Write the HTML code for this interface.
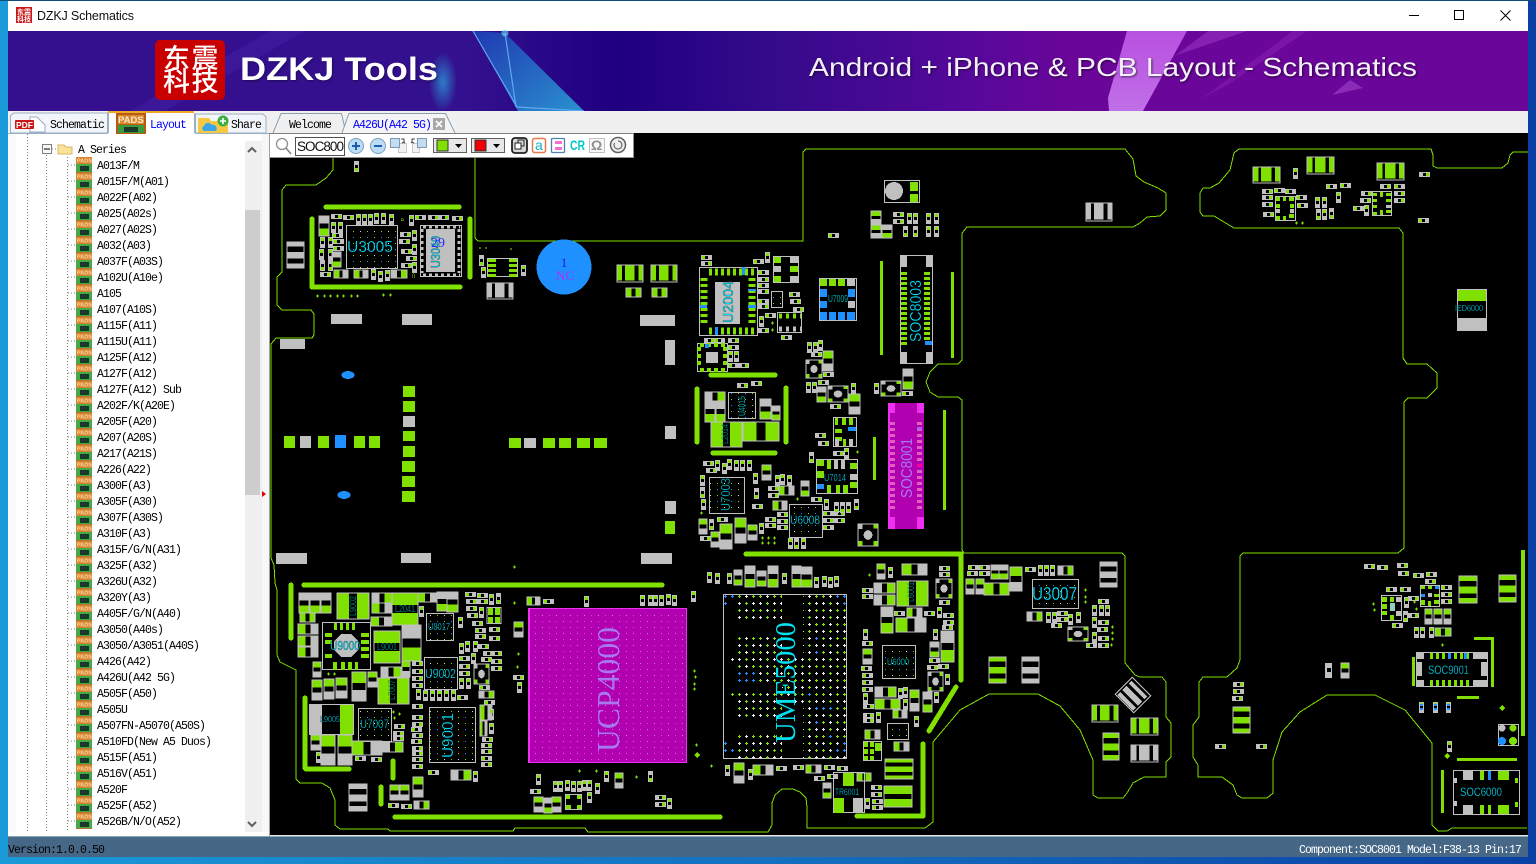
<!DOCTYPE html>
<html><head><meta charset="utf-8"><title>DZKJ Schematics</title>
<style>
html,body{margin:0;padding:0;width:1536px;height:864px;overflow:hidden;background:#0c4aa8}
svg{display:block}
text{white-space:pre}
.m{font:11.5px "Liberation Mono",monospace;letter-spacing:-.9px;fill:#000}
.g{fill:#80e000}.s{fill:#c0c0c0}.u{fill:#1e90ff}.o{fill:none;stroke:#c0c0c0}
.k{fill:#000}
.l{fill:none;stroke:#80e000}
.t{fill:none;stroke:#80e000;stroke-width:5;stroke-linecap:round}
.d{fill:url(#pd);stroke:#c0c0c0}
.dg{fill:none;stroke:#80e000}.ds{fill:none;stroke:#c0c0c0}.db{fill:none;stroke:#1e90ff}
.x{font-family:"Liberation Sans",sans-serif;fill:#00e5ff;stroke:#000;stroke-width:.25}
.y{font-family:"Liberation Sans",sans-serif;fill:#00a8a8}
.z{font-family:"Liberation Serif",serif}
#pcb{shape-rendering:crispEdges}
#pcb text{shape-rendering:auto}
</style></head><body>
<svg width="1536" height="864" viewBox="0 0 1536 864" xmlns="http://www.w3.org/2000/svg">
<defs>
<linearGradient id="desk" x1="0" x2="1" y1="0" y2="0"><stop offset="0" stop-color="#1a9ad8"/><stop offset=".5" stop-color="#1470c0"/><stop offset="1" stop-color="#0a40a4"/></linearGradient>
<linearGradient id="ban" x1="0" x2="1" y1="0" y2="0"><stop offset="0" stop-color="#35108e"/><stop offset=".3" stop-color="#33108e"/><stop offset=".4" stop-color="#1f0080"/><stop offset=".5" stop-color="#330a8a"/><stop offset=".63" stop-color="#55089a"/><stop offset=".7" stop-color="#6a0699"/><stop offset="1" stop-color="#6a0699"/></linearGradient>
<linearGradient id="bl" x1="0" x2="1" y1="0" y2="1"><stop offset="0" stop-color="#2038b0"/><stop offset="1" stop-color="#2a90d0"/></linearGradient>
<linearGradient id="pu" x1="0" x2="0" y1="0" y2="1"><stop offset="0" stop-color="#b850e0"/><stop offset="1" stop-color="#c070e8"/></linearGradient>
<radialGradient id="gl"><stop offset="0" stop-color="#2a98d8"/><stop offset="1" stop-color="#2a98d8" stop-opacity="0"/></radialGradient>
<pattern id="pd" width="14" height="12" patternUnits="userSpaceOnUse"><path fill="#80e000" d="M3 3h1v1h-1zM10 9h1v1h-1z"/><path fill="#e0e0e0" d="M10 3h1v1h-1z"/><path fill="#1e90ff" d="M3 9h1v1h-1z"/></pattern>
<pattern id="pm" width="14" height="12" patternUnits="userSpaceOnUse"><path fill="#e040c0" d="M3 3h1v1h-1zM10 9h1v1h-1z"/><path fill="#d080e0" d="M10 3h1v1h-1zM3 9h1v1h-1z"/></pattern>
<pattern id="pb" width="21" height="14" patternUnits="userSpaceOnUse" patternTransform="translate(736 593)"><path fill="#80e000" d="M3 2h1v1h1v1h-1v1h-1v-1h-1v-1h1zM10 9h1v1h1v1h-1v1h-1v-1h-1v-1h1zM17 2h1v1h1v1h-1v1h-1v-1h-1v-1h1z"/><path fill="#e8e8e8" d="M10 2h1v1h1v1h-1v1h-1v-1h-1v-1h1zM3 9h1v1h1v1h-1v1h-1v-1h-1v-1h1zM17 9h1v1h1v1h-1v1h-1v-1h-1v-1h1z"/></pattern>
<pattern id="pu2" width="7" height="7" patternUnits="userSpaceOnUse" patternTransform="translate(736 593)"><path fill="#1e90ff" d="M3 2h1v1h1v1h-1v1h-1v-1h-1v-1h1z"/></pattern>
<g id="a"><rect width="4" height="5" class="s"/><rect x="7" width="4" height="5" class="g"/><rect x=".5" y=".5" width="10" height="4" class="o"/></g>
<g id="b"><rect width="4" height="5" class="g"/><rect x="7" width="4" height="5" class="s"/><rect x=".5" y=".5" width="10" height="4" class="o"/></g>
<g id="c"><rect width="5" height="4" class="g"/><rect y="7" width="5" height="4" class="s"/><rect x=".5" y=".5" width="4" height="10" class="o"/></g>
<g id="e"><rect width="5" height="4" class="s"/><rect y="7" width="5" height="4" class="g"/><rect x=".5" y=".5" width="4" height="10" class="o"/></g>
<g id="A"><rect width=".38" height="1" class="s"/><rect x=".62" width=".38" height="1" class="g"/><rect width="1" height="1" class="o" vector-effect="non-scaling-stroke"/></g>
<g id="B"><rect width=".38" height="1" class="g"/><rect x=".62" width=".38" height="1" class="s"/><rect width="1" height="1" class="o" vector-effect="non-scaling-stroke"/></g>
<g id="C"><rect width="1" height=".38" class="g"/><rect y=".62" width="1" height=".38" class="s"/><rect width="1" height="1" class="o" vector-effect="non-scaling-stroke"/></g>
<g id="D"><rect width="1" height=".38" class="s"/><rect y=".62" width="1" height=".38" class="g"/><rect width="1" height="1" class="o" vector-effect="non-scaling-stroke"/></g>
<g id="GG"><rect width=".38" height="1" class="g"/><rect x=".62" width=".38" height="1" class="g"/><rect width="1" height="1" class="o" vector-effect="non-scaling-stroke"/></g>
<g id="HH"><rect width="1" height=".38" class="g"/><rect y=".62" width="1" height=".38" class="g"/><rect width="1" height="1" class="o" vector-effect="non-scaling-stroke"/></g>
<g id="SH"><rect width="1" height=".18" class="g"/><rect y=".38" width="1" height=".26" class="g"/><rect y=".82" width="1" height=".18" class="g"/><rect width="1" height="1" class="o" vector-effect="non-scaling-stroke"/></g>
<g id="XH"><rect width="1" height=".18" class="s"/><rect y=".38" width="1" height=".26" class="s"/><rect y=".82" width="1" height=".18" class="s"/><rect width="1" height="1" class="o" vector-effect="non-scaling-stroke"/></g>
<g id="SV"><rect width=".2" height=".92" class="g"/><rect x=".3" width=".38" height=".92" class="g"/><rect x=".82" width=".16" height=".92" class="g"/><rect width="1" height="1" class="o" vector-effect="non-scaling-stroke"/></g>
<g id="XV"><rect width=".2" height=".92" class="s"/><rect x=".3" width=".38" height=".92" class="s"/><rect x=".82" width=".16" height=".92" class="s"/><rect width="1" height="1" class="o" vector-effect="non-scaling-stroke"/></g>
<g id="Z"><rect width=".22" height=".22" class="s"/><rect x=".78" width=".22" height=".2" class="g"/><rect y=".78" width=".22" height=".22" class="g"/><rect x=".78" y=".78" width=".22" height=".22" class="g"/><ellipse cx=".5" cy=".5" rx=".22" ry=".22" class="s"/><rect width="1" height="1" class="o" vector-effect="non-scaling-stroke"/></g>
<g id="pi"><rect width="16" height="7" fill="#d8842e"/><text x="1" y="5.600" font-family="Liberation Sans" font-size="5.500" font-weight="700" fill="#f8d8a8">PADS</text><rect y="7" width="16" height="8" fill="#45a84a"/><rect x="4" y="9" width="9" height="5" fill="#1c3a2a"/><rect y="15" width="16" height="1" fill="#b8742a"/></g>
</defs>

<rect width="1536" height="864" fill="url(#desk)"/>
<!-- window -->
<rect x="8" y="0" width="1520" height="857" fill="#f0f0f0"/>
<rect x="0" y="0" width="1536" height="1" fill="#124a78"/>
<rect x="8" y="1" width="1520" height="30" fill="#fff"/>
<rect x="16" y="7" width="16" height="16" fill="#c81818"/>
<text x="17" y="14.500" font-family="Noto Sans CJK SC" font-size="7" font-weight="700" fill="#fff">东震</text>
<text x="17" y="21.500" font-family="Noto Sans CJK SC" font-size="7" font-weight="700" fill="#fff">科技</text>
<text x="37" y="20" font-family="Liberation Sans,sans-serif" font-size="12.500" fill="#111" textLength="97">DZKJ Schematics</text>
<path d="M1409 15.500h10" stroke="#000" fill="none"/>
<rect x="1454.500" y="10.500" width="9" height="9" fill="none" stroke="#000"/>
<path d="M1500.500 10.500l10 10M1510.500 10.500l-10 10" stroke="#000" fill="none"/>

<!-- banner -->
<rect x="8" y="31" width="1520" height="80" fill="url(#ban)"/>
<polygon points="130,111 165,111 305,31 270,31" fill="#4a28b0" opacity=".35"/>
<ellipse cx="443" cy="82" rx="14" ry="30" fill="url(#gl)" opacity=".8"/>
<polygon points="473,31 505,33 584,111 518,111" fill="url(#bl)"/>
<path d="M473 31L517 107L584 111M505 33L516 107" fill="none" stroke="#60a8f0" stroke-width="1.200"/>
<circle cx="505" cy="33" r="3.500" fill="#70d8f0" opacity=".6"/>
<polygon points="1177,55 1247,31 1208,31 1143,80" fill="#8520b0"/>
<polygon points="1235,80 1307,31 1293,31 1200,100" fill="#7a14a6"/>
<polygon points="1127,31 1108,98 1109,111 1143,111 1187,31" fill="url(#pu)"/>
<polygon points="1332,95 1350,80 1363,88" fill="#8a2cb8"/>
<rect x="155" y="40" width="70" height="60" rx="5" fill="#c80000"/>
<text x="163" y="68" font-family="Noto Sans CJK SC,sans-serif" font-size="27" font-weight="500" letter-spacing="1.500" fill="#fff">东震</text>
<text x="163" y="91" font-family="Noto Sans CJK SC,sans-serif" font-size="27" font-weight="500" letter-spacing="1.500" fill="#fff">科技</text>
<text x="240" y="80" font-family="Liberation Sans,sans-serif" font-size="32" font-weight="700" fill="#fff" textLength="198" lengthAdjust="spacingAndGlyphs" style="filter:drop-shadow(1px 1px 1px #0006)">DZKJ Tools</text>
<text x="809" y="76" font-family="Liberation Sans,sans-serif" font-size="26" fill="#f4f0fa" textLength="608" lengthAdjust="spacingAndGlyphs" style="filter:drop-shadow(1px 1px 1px #0009)">Android + iPhone &amp; PCB Layout - Schematics</text>

<!-- tabs left -->
<rect x="8" y="111" width="1520" height="23" fill="#f0f0f0"/>
<path d="M10.500 133V116l3-3H107.500V133z" fill="#f2f6fa" stroke="#9ab0c4"/>
<path d="M195.500 133V114H263l3 3V133z" fill="#f2f6fa" stroke="#9ab0c4"/>
<rect x="108" y="111" width="87" height="23" fill="#fff"/>
<rect x="108" y="111" width="86" height="2" fill="#f0a828"/>
<path d="M108.500 113V133M194.500 113V133" stroke="#9ab0c4"/>
<rect x="8" y="133" width="100" height="1" fill="#9ab0c4"/><rect x="195" y="133" width="74" height="1" fill="#9ab0c4"/>
<path d="M30 117h7l8 8v7H30z" fill="#fff" stroke="#9ac"/>
<rect x="15" y="120" width="19" height="9" rx="1" fill="#c81818"/>
<text x="16" y="128" font-family="Liberation Sans" font-size="8.500" font-weight="700" fill="#fff">PDF</text>
<text class="m" x="50" y="128">Schematic</text>
<rect x="116" y="113" width="30" height="21" fill="#b85a10"/>
<rect x="118" y="115" width="26" height="9" fill="#d88a30"/>
<text x="118" y="123" font-family="Liberation Sans" font-size="9.500" font-weight="700" fill="#f8e8c8">PADS</text>
<rect x="118" y="125" width="26" height="8" fill="#3a9a40"/><rect x="124" y="127" width="14" height="5" fill="#1c3a2a"/>
<text class="m" x="150" y="128" style="fill:#0000ff">Layout</text>
<path d="M198 118h11l2 3h17v12h-30z" fill="#f7c844"/>
<path d="M205 131c-3 0-4-4-1-5 1-4 6-4 8-1 3-1 6 2 4 6z" fill="#3aa6e8"/>
<circle cx="223" cy="121" r="5.500" fill="#3fae45"/>
<path d="M220 121h6M223 118v6" stroke="#fff" stroke-width="1.600"/>
<text class="m" x="231" y="128">Share</text>

<!-- tabs right -->
<path d="M273 133L281 113.500H341.500L346 133" fill="#f0f0f0" stroke="#8aa0b0"/>
<path d="M342 133L349 113.500H445.500L455 133" fill="#f4f4f4" stroke="#8aa0b0"/>
<text class="m" x="289" y="128">Welcome</text>
<text class="m" x="353" y="128" style="fill:#0000ff">A426U(A42 5G)</text>
<rect x="433" y="118" width="12" height="12" fill="#a8a8a8"/>
<path d="M436 121l6 6M442 121l-6 6" stroke="#fff" stroke-width="1.600"/>

<!-- left panel -->
<rect x="8" y="134" width="261" height="702" fill="#fff"/>
<rect x="8" y="134" width="8" height="698" fill="#fbfbfb"/>
<rect x="245" y="141" width="17" height="691" fill="#f0f0f0"/>
<rect x="262" y="134" width="7" height="698" fill="#f7f7f7"/>
<rect x="245" y="210" width="15" height="285" fill="#cdcdcd"/>
<path d="M248 152l4-4 4 4M248 822l4 4 4-4" fill="none" stroke="#606060" stroke-width="2"/>
<path d="M262 491l4 3-4 3z" fill="#e00000"/>
<path d="M27.500 134V832M46.500 155V832M67.500 157V832M52 149h6" stroke="#808080" stroke-dasharray="1 2" fill="none"/>
<rect x="42.500" y="144.500" width="9" height="9" fill="#f8f8f8" stroke="#808080"/><path d="M44 149h6" stroke="#000"/>
<path d="M58 145h6l2 2h6v7H58z" fill="#f9e39a" stroke="#d8b860"/>
<text class="m" x="78" y="153">A Series</text>
<g stroke="#808080" stroke-dasharray="1 2">
<path d="M68 165h8M68 181h8M68 197h8M68 213h8M68 229h8M68 245h8M68 261h8M68 277h8M68 293h8M68 309h8M68 325h8M68 341h8M68 357h8M68 373h8M68 389h8M68 405h8M68 421h8M68 437h8M68 453h8M68 469h8M68 485h8M68 501h8M68 517h8M68 533h8M68 549h8M68 565h8M68 581h8M68 597h8M68 613h8M68 629h8M68 645h8M68 661h8M68 677h8M68 693h8M68 709h8M68 725h8M68 741h8M68 757h8M68 773h8M68 789h8M68 805h8M68 821h8"/>
</g>
<use href="#pi" x="76" y="157"/><text class="m" x="97" y="169">A013F/M</text>
<use href="#pi" x="76" y="173"/><text class="m" x="97" y="185">A015F/M(A01)</text>
<use href="#pi" x="76" y="189"/><text class="m" x="97" y="201">A022F(A02)</text>
<use href="#pi" x="76" y="205"/><text class="m" x="97" y="217">A025(A02s)</text>
<use href="#pi" x="76" y="221"/><text class="m" x="97" y="233">A027(A02S)</text>
<use href="#pi" x="76" y="237"/><text class="m" x="97" y="249">A032(A03)</text>
<use href="#pi" x="76" y="253"/><text class="m" x="97" y="265">A037F(A03S)</text>
<use href="#pi" x="76" y="269"/><text class="m" x="97" y="281">A102U(A10e)</text>
<use href="#pi" x="76" y="285"/><text class="m" x="97" y="297">A105</text>
<use href="#pi" x="76" y="301"/><text class="m" x="97" y="313">A107(A10S)</text>
<use href="#pi" x="76" y="317"/><text class="m" x="97" y="329">A115F(A11)</text>
<use href="#pi" x="76" y="333"/><text class="m" x="97" y="345">A115U(A11)</text>
<use href="#pi" x="76" y="349"/><text class="m" x="97" y="361">A125F(A12)</text>
<use href="#pi" x="76" y="365"/><text class="m" x="97" y="377">A127F(A12)</text>
<use href="#pi" x="76" y="381"/><text class="m" x="97" y="393">A127F(A12) Sub</text>
<use href="#pi" x="76" y="397"/><text class="m" x="97" y="409">A202F/K(A20E)</text>
<use href="#pi" x="76" y="413"/><text class="m" x="97" y="425">A205F(A20)</text>
<use href="#pi" x="76" y="429"/><text class="m" x="97" y="441">A207(A20S)</text>
<use href="#pi" x="76" y="445"/><text class="m" x="97" y="457">A217(A21S)</text>
<use href="#pi" x="76" y="461"/><text class="m" x="97" y="473">A226(A22)</text>
<use href="#pi" x="76" y="477"/><text class="m" x="97" y="489">A300F(A3)</text>
<use href="#pi" x="76" y="493"/><text class="m" x="97" y="505">A305F(A30)</text>
<use href="#pi" x="76" y="509"/><text class="m" x="97" y="521">A307F(A30S)</text>
<use href="#pi" x="76" y="525"/><text class="m" x="97" y="537">A310F(A3)</text>
<use href="#pi" x="76" y="541"/><text class="m" x="97" y="553">A315F/G/N(A31)</text>
<use href="#pi" x="76" y="557"/><text class="m" x="97" y="569">A325F(A32)</text>
<use href="#pi" x="76" y="573"/><text class="m" x="97" y="585">A326U(A32)</text>
<use href="#pi" x="76" y="589"/><text class="m" x="97" y="601">A320Y(A3)</text>
<use href="#pi" x="76" y="605"/><text class="m" x="97" y="617">A405F/G/N(A40)</text>
<use href="#pi" x="76" y="621"/><text class="m" x="97" y="633">A3050(A40s)</text>
<use href="#pi" x="76" y="637"/><text class="m" x="97" y="649">A3050/A3051(A40S)</text>
<use href="#pi" x="76" y="653"/><text class="m" x="97" y="665">A426(A42)</text>
<use href="#pi" x="76" y="669"/><text class="m" x="97" y="681">A426U(A42 5G)</text>
<use href="#pi" x="76" y="685"/><text class="m" x="97" y="697">A505F(A50)</text>
<use href="#pi" x="76" y="701"/><text class="m" x="97" y="713">A505U</text>
<use href="#pi" x="76" y="717"/><text class="m" x="97" y="729">A507FN-A5070(A50S)</text>
<use href="#pi" x="76" y="733"/><text class="m" x="97" y="745">A510FD(New A5 Duos)</text>
<use href="#pi" x="76" y="749"/><text class="m" x="97" y="761">A515F(A51)</text>
<use href="#pi" x="76" y="765"/><text class="m" x="97" y="777">A516V(A51)</text>
<use href="#pi" x="76" y="781"/><text class="m" x="97" y="793">A520F</text>
<use href="#pi" x="76" y="797"/><text class="m" x="97" y="809">A525F(A52)</text>
<use href="#pi" x="76" y="813"/><text class="m" x="97" y="825">A526B/N/O(A52)</text>
<rect x="8" y="832" width="261" height="4" fill="#fff"/>
<rect x="269" y="134" width="1" height="702" fill="#a0a0a0"/>

<!-- canvas -->
<rect x="270" y="133" width="1258" height="702" fill="#000"/>
<rect x="269" y="133" width="365" height="1" fill="#808080"/>
<rect x="270" y="835" width="1258" height="1" fill="#e8e8e8"/>

<g id="pcb">
<!-- outlines -->
<path class="l" d="M333 134V170L326 178L316 185H286L282 190V272L277 277V305L282 310H311L314 314V335L312 338H276L271 344V558L274 565L275 583L277 590V655L280 662L296 670V779L300 783H322L330 788L335 800V825L340 829H388L390 831H513L515 828H585L588 832H768L772 825V803L775 795L782 789H793L800 792L806 798L807 807V828H838L840 828H925L933 822V742L960 710L989 694H1038L1060 706L1080 730L1093 760V795L1098 798H1123L1127 793L1133 783L1144 777H1166V762L1171 757V723L1166 717V682L1162 677H1140L1135 675L1125 663V556L1122 553H964L962 550V400L958 397H938L930 392L926 382L930 372L938 364H958L962 360V233L967 227H1133L1140 223L1147 217L1160 216L1166 210V193L1158 188L1144 182L1136 176L1133 159L1125 149H806L803 152V241H478L475 238V134"/>
<path class="l" d="M1528 152H1513L1510 155L1508 163L1502 168H1437L1433 166V155L1431 149H1239L1234 153L1230 170L1219 183L1210 188H1203L1200 193V212L1203 216H1214L1234 228H1399L1403 233V358L1407 364H1427L1437 373V388L1427 398H1408L1404 402V548L1398 553H1243L1240 556V660L1237 668L1227 677H1203L1199 682V717L1193 725V757L1198 765V777H1222L1233 785L1237 795L1242 798H1267L1273 793V760L1282 732L1300 712L1327 695H1375L1405 710L1432 743V825L1438 831H1447L1452 828H1527"/>

<!-- U3005 area -->
<path class="t" d="M326 207H459M312 219V285M312 287H460M470 219V277"/>
<rect class="d" x="346.500" y="225.500" width="51" height="43"/>
<text class="x" font-size="16" x="347" y="252" textLength="46" lengthAdjust="spacingAndGlyphs">U3005</text>
<rect x="420.500" y="225.500" width="41" height="51" fill="#000" stroke="#c0c0c0"/>
<rect class="s" x="426" y="229" width="29" height="43"/>
<path class="ds" stroke-width="3" stroke-dasharray="3 3" d="M423 227H460M423 275H460M422 229V273M459 229V273"/>
<text class="x" font-size="13" transform="rotate(-90 440 268)" x="440" y="268" textLength="32" lengthAdjust="spacingAndGlyphs">U3040</text>
<text x="431" y="247" font-family="Liberation Serif" font-size="14" fill="#2828ff">29</text>
<use href="#D" transform="matrix(10 0 0 20 319 216)"/>
<use href="#XH" transform="matrix(17 0 0 26 287 242)"/>
<use href="#a" x="331" y="214"/><use href="#a" x="343" y="215"/><use href="#c" x="356" y="214"/><use href="#c" x="362" y="214"/><use href="#c" x="368" y="214"/><use href="#c" x="374" y="213"/><use href="#c" x="381" y="213"/><use href="#c" x="389" y="214"/>
<use href="#c" x="331" y="222"/><use href="#c" x="338" y="222"/><use href="#b" x="332" y="233"/><use href="#b" x="333" y="239"/><use href="#b" x="333" y="246"/><use href="#c" x="320" y="237"/><use href="#c" x="328" y="237"/><use href="#c" x="319" y="249"/><use href="#c" x="328" y="249"/><use href="#e" x="320" y="260"/><use href="#e" x="328" y="260"/><use href="#D" transform="matrix(9 0 0 15 332 252)"/><use href="#a" x="320" y="272"/>
<use href="#B" transform="matrix(14 0 0 8 334 270)"/><use href="#B" transform="matrix(14 0 0 8 354 270)"/><use href="#c" x="371" y="269"/><use href="#c" x="378" y="271"/><use href="#c" x="385" y="270"/><use href="#A" transform="matrix(16 0 0 8 391 270)"/>
<use href="#a" x="400" y="232"/><use href="#a" x="399" y="239"/><use href="#c" x="412" y="230"/><use href="#a" x="401" y="249"/><use href="#c" x="412" y="244"/><use href="#a" x="406" y="256"/><use href="#a" x="401" y="263"/><use href="#c" x="412" y="262"/><use href="#c" x="409" y="215"/>
<use href="#b" x="415" y="215"/><use href="#a" x="428" y="215"/><use href="#a" x="438" y="215"/><use href="#a" x="452" y="216"/>
<path class="dg" stroke-dasharray="1 1" d="M401 220h4M402 218v4M412 275h4M413 273h1M412 277h3"/>
<circle class="u" cx="564" cy="267" r="27.500"/>
<text x="564" y="267" text-anchor="middle" font-family="Liberation Serif" font-size="13" fill="#1818f0">1</text>
<text x="565" y="280" text-anchor="middle" font-family="Liberation Serif" font-size="13" fill="#b030f0">NC</text>
<path class="dg" stroke-width="1" stroke-dasharray="2 2" d="M479 248h3M485 248h3M510 249h3"/>
<use href="#e" x="479" y="255"/><use href="#c" x="481" y="267"/><use href="#c" x="521" y="265"/>
<rect x="487.500" y="258.500" width="30" height="18" fill="none" stroke="#c0c0c0"/>
<path class="dg" stroke-width="8" stroke-dasharray="3 2" d="M492 259V277M513 259V277"/>
<use href="#XV" transform="matrix(26 0 0 16 487 283)"/>
<use href="#SV" transform="matrix(26 0 0 17 617 265)"/><use href="#SV" transform="matrix(26 0 0 17 651 265)"/>
<use href="#GG" transform="matrix(15 0 0 9 626 288)"/><use href="#GG" transform="matrix(15 0 0 9 652 288)"/>
<use href="#e" x="354" y="161"/>
<path class="dg" d="M316 296h3M317.500 294.500v3M323 296h3M324.500 294.500v3M329 296h3M330.500 294.500v3M336 296h3M337.500 294.500v3M342 296h3M343.500 294.500v3M350 296h3M351.500 294.500v3M356 296h3M357.500 294.500v3M382 295h3M383.500 293.500v3M389 295h3M390.500 293.500v3"/>

<!-- middle block -->
<path class="s" d="M331 314h31v10h-31zM402 314h30v11h-30zM640 315h35v11h-35zM280 339h25v10h-25zM665 340h10v25h-10zM665 426h11v13h-11zM665 501h11v13h-11zM276 553h31v11h-31zM401 553h30v10h-30zM641 553h31v11h-31zM403 416h12v11h-12zM300 436h11v12h-11zM524 438h12v10h-12z"/>
<path class="g" d="M665 521h10v13h-10zM403 386h12v11h-12zM403 401h12v11h-12zM403 431h12v10h-12zM403 446h12v11h-12zM402 461h13v11h-13zM402 476h13v11h-13zM402 491h13v11h-13zM284 436h11v12h-11zM318 436h11v12h-11zM354 436h11v12h-11zM369 436h11v12h-11zM509 438h12v10h-12zM543 438h12v10h-12zM559 438h12v10h-12zM577 438h13v10h-13zM594 438h13v10h-13z"/>
<rect class="u" x="335" y="435" width="11" height="13"/>
<ellipse class="u" cx="348" cy="375" rx="6.500" ry="4"/><ellipse class="u" cx="344" cy="495" rx="6.500" ry="4"/>
<path class="dg" d="M513 567h3M514.500 565.500v3"/>

<!-- U2004 group -->
<rect x="699.500" y="267.500" width="58" height="68" fill="#000" stroke="#c0c0c0"/>
<rect class="s" x="715" y="282" width="25" height="42"/>
<path class="dg" stroke-width="7" stroke-dasharray="3 3" d="M709 272H755M709 331H755"/>
<path class="dg" stroke-width="7" stroke-dasharray="3 3" d="M704 278V326M752 278V326"/>
<rect class="u" x="742" y="267" width="3" height="8"/><rect class="u" x="715" y="327" width="3" height="8"/><rect class="u" x="700" y="305" width="7" height="3"/><rect class="u" x="748" y="305" width="8" height="3"/><rect class="u" x="748" y="289" width="8" height="2"/>
<text class="x" font-size="15" transform="rotate(-90 733 323)" x="733" y="323" textLength="42" lengthAdjust="spacingAndGlyphs">U2004</text>
<use href="#b" x="701" y="255"/><use href="#a" x="701" y="261"/><use href="#c" x="765" y="252"/><use href="#b" x="753" y="259"/>
<rect x="773.500" y="256.500" width="25" height="26" fill="none" stroke="#c0c0c0"/><path class="g" d="M774 257h7v6h-7zM790 266h8v6h-8zM774 276h7v6h-7z"/><path class="s" d="M790 257h8v6h-8zM774 266h7v6h-7zM790 276h8v6h-8z"/>
<use href="#b" x="758" y="270"/><use href="#a" x="758" y="277"/><use href="#b" x="758" y="283"/><use href="#a" x="758" y="289"/><use href="#b" x="758" y="299"/><use href="#a" x="758" y="304"/>
<rect class="d" x="771.500" y="291.500" width="11" height="16"/>
<use href="#b" x="789" y="292"/><use href="#a" x="790" y="299"/><use href="#a" x="793" y="307"/><use href="#b" x="765" y="313"/><use href="#c" x="759" y="316"/><use href="#a" x="758" y="328"/><use href="#b" x="781" y="335"/>
<rect x="777.500" y="312.500" width="24" height="20" fill="none" stroke="#c0c0c0"/><path class="dg" stroke-width="5" stroke-dasharray="3 4" d="M779 316H801"/><path class="ds" stroke-width="5" stroke-dasharray="3 4" d="M779 329H801"/>
<rect x="819.500" y="278.500" width="37" height="42" fill="none" stroke="#c0c0c0"/>
<path class="g" d="M820 279h7v7h-7zM829 279h7v7h-7zM838 279h7v7h-7z"/><path class="s" d="M847 279h8v7h-8zM848 301h7v7h-7z"/>
<path class="u" d="M820 289h7v8h-7zM848 289h7v8h-7zM820 301h7v7h-7zM820 312h7v8h-7zM829 312h7v8h-7zM838 312h7v8h-7zM847 312h8v8h-8z"/>
<text class="y" font-size="10" x="828" y="302" textLength="20" lengthAdjust="spacingAndGlyphs">U7009</text>
<rect x="900.500" y="255.500" width="32" height="108" fill="#000" stroke="#c0c0c0"/>
<path class="s" d="M901 256h6v11h-6zM926 256h6v11h-6zM901 352h6v11h-6zM926 352h6v11h-6z"/>
<path class="dg" stroke-width="6" stroke-dasharray="3 2" d="M904 272V345M927 272V340"/>
<rect class="u" x="925" y="341" width="7" height="4"/>
<text class="x" font-size="16" transform="rotate(-90 921 342)" x="921" y="342" textLength="62" lengthAdjust="spacingAndGlyphs">SOC8003</text>
<path class="g" d="M880 261h3v94h-3zM951 272h3v86h-3zM873 437h3v43h-3zM943 410h3v100h-3z"/>
<rect x="697.500" y="343.500" width="30" height="28" fill="#000" stroke="#c0c0c0"/><rect class="s" x="706" y="352" width="12" height="11"/>
<path class="dg" stroke-width="4" stroke-dasharray="4 3" d="M700 345H726M700 370H726M699 347V368M725 347V368"/><rect class="u" x="705" y="344" width="4" height="4"/>
<use href="#a" x="704" y="338"/><use href="#b" x="714" y="338"/><use href="#a" x="728" y="338"/><use href="#b" x="728" y="345"/><use href="#c" x="728" y="351"/><use href="#c" x="734" y="351"/><use href="#b" x="728" y="363"/><use href="#a" x="738" y="363"/>
<path class="t" d="M711 375H775M697 389V442M786 388V442M713 453H775"/>
<use href="#a" x="737" y="383"/><use href="#a" x="751" y="381"/>
<rect class="d" x="728.500" y="392.500" width="27" height="26"/>
<text class="y" font-size="9" transform="rotate(-90 745 416)" x="745" y="416" textLength="20" lengthAdjust="spacingAndGlyphs">U4015</text>
<use href="#A" transform="matrix(20 0 0 9 705 392)"/><use href="#D" transform="matrix(10 0 0 21 705 401)"/><use href="#D" transform="matrix(9 0 0 21 716 401)"/>
<use href="#GG" transform="matrix(31 0 0 25 711 422)"/><text class="y" font-size="9" transform="rotate(-90 728 444)" x="728" y="444" textLength="20" lengthAdjust="spacingAndGlyphs" style="fill:#007f7f">L2014</text>
<use href="#GG" transform="matrix(36 0 0 19 743 422)"/>
<use href="#D" transform="matrix(11 0 0 20 760 399)"/><use href="#D" transform="matrix(8 0 0 14 772 406)"/>
<use href="#a" x="703" y="461"/><use href="#a" x="706" y="468"/><use href="#c" x="715" y="460"/><use href="#c" x="722" y="463"/><use href="#c" x="727" y="459"/><use href="#c" x="734" y="460"/><use href="#c" x="740" y="460"/><use href="#c" x="747" y="460"/><use href="#C" transform="matrix(9 0 0 15 762 465)"/>
<use href="#c" x="700" y="475"/><use href="#e" x="700" y="487"/><use href="#c" x="701" y="499"/>
<rect class="d" x="709.500" y="477.500" width="35" height="36"/>
<text class="x" font-size="13" transform="rotate(-90 730 511)" x="730" y="511" textLength="33" lengthAdjust="spacingAndGlyphs" style="fill:#00c8d8">U7003</text>
<use href="#c" x="753" y="473"/><use href="#e" x="754" y="488"/><use href="#a" x="752" y="504"/><use href="#c" x="775" y="475"/><use href="#c" x="780" y="474"/><use href="#c" x="787" y="475"/><use href="#B" transform="matrix(15 0 0 9 779 486)"/><use href="#a" x="768" y="486"/><use href="#a" x="768" y="493"/>
<use href="#D" transform="matrix(8 0 0 15 801 481)"/><use href="#B" transform="matrix(14 0 0 9 773 501)"/><use href="#a" x="777" y="512"/><use href="#a" x="777" y="519"/><use href="#a" x="777" y="525"/>
<rect class="d" x="789.500" y="504.500" width="33" height="33"/><text class="x" font-size="11.500" x="790" y="524" textLength="30" lengthAdjust="spacingAndGlyphs">U6008</text>
<use href="#a" x="765" y="517"/><use href="#a" x="765" y="523"/><use href="#c" x="759" y="523"/><use href="#b" x="717" y="517"/><use href="#C" transform="matrix(8 0 0 15 699 519)"/><use href="#e" x="709" y="519"/><use href="#a" x="700" y="536"/><use href="#C" transform="matrix(8 0 0 15 711 532)"/><use href="#C" transform="matrix(12 0 0 25 720 524)"/><use href="#C" transform="matrix(11 0 0 25 735 518)"/><use href="#C" transform="matrix(9 0 0 15 748 525)"/>
<path class="dg" d="M761 538h3M762.500 536.500v3M767 538h3M768.500 536.500v3M773 538h3M774.500 536.500v3M761 543h3M762.500 541.500v3M767 543h3M768.500 541.500v3M773 543h3M774.500 541.500v3M796 499h3M797.500 497.500v3M700 513h3M701.500 511.500v3M771 323h3M772.500 321.500v3M771 330h3M772.500 328.500v3M856 452h3M857.500 450.500v3M868 575h3M869.500 573.500v3"/>
<use href="#c" x="788" y="538"/><use href="#e" x="794" y="538"/><use href="#c" x="801" y="538"/>
<use href="#b" x="823" y="511"/><use href="#a" x="823" y="518"/><use href="#b" x="823" y="525"/><use href="#a" x="834" y="511"/><use href="#a" x="834" y="518"/><use href="#c" x="824" y="499"/><use href="#e" x="834" y="502"/><use href="#e" x="840" y="502"/><use href="#e" x="846" y="502"/><use href="#e" x="854" y="499"/><use href="#a" x="811" y="497"/>
<rect x="816.500" y="459.500" width="41" height="34" fill="none" stroke="#c0c0c0"/>
<path class="g" d="M817 460h7v6h-7zM827 460h4v9h-4zM850 463h7v6h-7zM817 471h7v7h-7zM850 482h7v6h-7zM827 485h4v8h-4zM836 485h4v8h-4zM843 485h5v8h-5z"/><path class="s" d="M834 460h4v9h-4zM841 460h4v9h-4zM850 474h7v6h-7z"/><rect class="u" x="817" y="484" width="7" height="5"/>
<text class="x" font-size="10" x="824" y="481" textLength="22" lengthAdjust="spacingAndGlyphs">U7014</text>
<use href="#Z" transform="matrix(20 0 0 22 858 524)"/>
<!-- SOC8001 -->
<rect x="888" y="403" width="36" height="126" fill="#b000b0"/>
<path fill="#f030f0" d="M888 403h7v10h-7zM917 403h7v10h-7zM888 517h7v12h-7zM917 517h7v12h-7zM888 403h2v126h-2z"/>
<path fill="none" stroke="#e060c0" stroke-width="5" stroke-dasharray="3 3" d="M892.500 422V510M919.500 422V510"/>
<rect x="917" y="427" width="5" height="3" fill="#b060f0"/><rect x="917" y="464" width="5" height="3" fill="#ff00a0"/>
<text transform="rotate(-90 912 498)" x="912" y="498" font-family="Liberation Sans" font-size="16" fill="#a878f0" textLength="60" lengthAdjust="spacingAndGlyphs">SOC8001</text>
<use href="#c" x="807" y="342"/><use href="#c" x="813" y="342"/><use href="#c" x="818" y="340"/><use href="#a" x="811" y="352"/><use href="#C" transform="matrix(10 0 0 20 823 351)"/><use href="#b" x="823" y="372"/><use href="#Z" transform="matrix(16 0 0 18 806 360)"/>
<use href="#c" x="806" y="382"/><use href="#c" x="812" y="382"/><use href="#b" x="818" y="380"/><use href="#D" transform="matrix(9 0 0 15 817 387)"/><use href="#Z" transform="matrix(20 0 0 16 828 386)"/><use href="#c" x="851" y="383"/><use href="#C" transform="matrix(11 0 0 20 849 394)"/><use href="#a" x="830" y="404"/>
<rect x="833.500" y="417.500" width="23" height="29" fill="none" stroke="#c0c0c0"/><path class="g" d="M835 418h3v7h-3zM842 418h4v7h-4zM849 418h4v7h-4zM835 429h7v4h-7zM835 437h7v4h-7zM843 439h3v7h-3z"/><path class="s" d="M849 439h4v7h-4zM835 439h4v7h-4z"/><rect class="u" x="848" y="427" width="8" height="4"/>
<use href="#a" x="815" y="433"/><use href="#a" x="818" y="441"/><use href="#e" x="809" y="452"/><use href="#a" x="833" y="451"/><use href="#c" x="844" y="448"/>
<use href="#c" x="874" y="383"/><use href="#Z" transform="matrix(20 0 0 15 881 381)"/><use href="#D" transform="matrix(10 0 0 20 903 369)"/><use href="#b" x="902" y="391"/>
<rect x="884.500" y="180.500" width="35" height="22" fill="none" stroke="#c0c0c0"/><circle class="s" cx="894" cy="191" r="9"/><path class="g" d="M910 182h8v9h-8zM910 194h8v8h-8z"/>
<use href="#C" transform="matrix(10 0 0 13 871 211)"/><use href="#D" transform="matrix(10 0 0 13 882 225)"/><use href="#C" transform="matrix(10 0 0 13 871 225)"/><use href="#a" x="893" y="212"/><use href="#a" x="893" y="219"/><use href="#c" x="907" y="213"/><use href="#c" x="913" y="213"/><use href="#c" x="926" y="213"/><use href="#c" x="934" y="213"/><use href="#c" x="926" y="226"/><use href="#c" x="934" y="226"/><use href="#e" x="903" y="226"/><use href="#e" x="913" y="226"/><use href="#b" x="828" y="233"/>

<!-- Bottom-left -->
<path class="t" d="M304 585H662M291 585V638M305 698V768M306 769H349M393 761V778M381 787V804M395 817H720"/>
<use href="#D" transform="matrix(10 0 0 20 299 593)"/><use href="#D" transform="matrix(10 0 0 20 310 593)"/><use href="#D" transform="matrix(10 0 0 20 321 593)"/><use href="#GG" transform="matrix(15 0 0 9 300 613)"/>
<use href="#GG" transform="matrix(32 0 0 26 337 593)"/><text class="y" font-size="9" transform="rotate(-90 356 616)" x="356" y="616" textLength="20" lengthAdjust="spacingAndGlyphs" style="fill:#008080">L9002</text>
<use href="#A" transform="matrix(20 0 0 10 372 593)"/><use href="#B" transform="matrix(20 0 0 10 372 603)"/><use href="#B" transform="matrix(21 0 0 9 371 617)"/>
<use href="#HH" transform="matrix(26 0 0 32 392 593)"/><text class="y" font-size="10" x="395" y="612" textLength="20" lengthAdjust="spacingAndGlyphs" style="fill:#008080">L2041</text>
<use href="#B" transform="matrix(19 0 0 9 418 593)"/><use href="#D" transform="matrix(10 0 0 19 437 592)"/><use href="#D" transform="matrix(11 0 0 20 447 592)"/><use href="#c" x="419" y="606"/>
<rect class="d" x="426.500" y="613.500" width="27" height="27"/><text class="x" font-size="10" x="428" y="630" textLength="22" lengthAdjust="spacingAndGlyphs">U8017</text>
<use href="#D" transform="matrix(19 0 0 36 402 625)"/>
<rect x="322.500" y="622.500" width="48" height="47" fill="#000" stroke="#c0c0c0"/>
<polygon class="s" points="341,634 351,634 358,641 358,650 351,657 341,657 334,650 334,641"/>
<path class="g" d="M334 623h3v7h-3zM340 623h3v7h-3zM346 623h3v7h-3zM352 623h3v7h-3zM325 633h7v4h-7zM325 640h7v4h-7zM325 654h7v4h-7zM361 633h8v4h-8zM361 640h8v4h-8zM361 647h8v4h-8zM361 654h8v4h-8zM333 662h4v8h-4zM341 662h4v8h-4zM348 662h4v8h-4zM355 662h3v8h-3z"/>
<text class="x" font-size="13" x="330" y="650" textLength="30" lengthAdjust="spacingAndGlyphs">U9000</text>
<use href="#HH" transform="matrix(26 0 0 32 374 631)"/><text class="y" font-size="10" x="377" y="650" textLength="20" lengthAdjust="spacingAndGlyphs" style="fill:#007f7f">L9001</text>
<use href="#B" transform="matrix(20 0 0 10 298 624)"/><use href="#B" transform="matrix(20 0 0 10 298 636)"/><use href="#B" transform="matrix(20 0 0 10 298 647)"/>
<use href="#C" transform="matrix(8 0 0 15 313 662)"/><use href="#C" transform="matrix(10 0 0 20 312 680)"/><use href="#C" transform="matrix(10 0 0 20 324 679)"/><use href="#C" transform="matrix(11 0 0 20 336 678)"/><use href="#C" transform="matrix(14 0 0 29 352 672)"/><use href="#C" transform="matrix(9 0 0 15 368 672)"/>
<use href="#A" transform="matrix(20 0 0 10 381 667)"/><use href="#C" transform="matrix(8 0 0 16 402 661)"/>
<use href="#GG" transform="matrix(31 0 0 26 378 678)"/><text class="y" font-size="9" transform="rotate(-90 395 700)" x="395" y="700" textLength="20" lengthAdjust="spacingAndGlyphs" style="fill:#007f7f">L7007</text>
<rect class="d" x="424.500" y="657.500" width="33" height="32"/><text class="x" font-size="12.500" x="425" y="678" textLength="31" lengthAdjust="spacingAndGlyphs">U9002</text>
<use href="#a" x="412" y="661"/><use href="#a" x="412" y="669"/><use href="#a" x="412" y="676"/><use href="#a" x="412" y="683"/>
<use href="#c" x="416" y="689"/><use href="#c" x="423" y="690"/><use href="#c" x="430" y="690"/><use href="#c" x="437" y="690"/><use href="#c" x="444" y="690"/><use href="#c" x="451" y="690"/><use href="#b" x="457" y="695"/>
<use href="#a" x="412" y="704"/><use href="#a" x="412" y="715"/><use href="#a" x="412" y="722"/><use href="#b" x="411" y="727"/><use href="#a" x="412" y="733"/><use href="#a" x="411" y="739"/><use href="#a" x="412" y="746"/><use href="#a" x="412" y="751"/><use href="#a" x="412" y="757"/><use href="#a" x="412" y="764"/><use href="#b" x="428" y="770"/>
<rect x="309.500" y="704.500" width="44" height="30" fill="#000" stroke="#c0c0c0"/><path class="s" d="M310 705h12v29h-12z"/><path class="g" d="M340 705h13v29h-13z"/><text class="x" font-size="8.500" x="320" y="722" textLength="20" lengthAdjust="spacingAndGlyphs">L9005</text>
<rect class="d" x="358.500" y="708.500" width="33" height="33"/><text class="x" font-size="12" x="360" y="728" textLength="29" lengthAdjust="spacingAndGlyphs" style="fill:#00d0d0">U7007</text>
<use href="#C" transform="matrix(9 0 0 15 311 735)"/><use href="#C" transform="matrix(14 0 0 30 321 735)"/><use href="#C" transform="matrix(14 0 0 30 338 735)"/><use href="#c" x="316" y="752"/><use href="#B" transform="matrix(30 0 0 14 352 741)"/><use href="#A" transform="matrix(21 0 0 10 382 742)"/><use href="#b" x="355" y="756"/><use href="#a" x="371" y="757"/><use href="#a" x="394" y="724"/><use href="#a" x="393" y="731"/><use href="#a" x="393" y="736"/>
<rect class="d" x="429.500" y="707.500" width="46" height="55"/><text class="x" font-size="16" transform="rotate(-90 453 758)" x="453" y="758" textLength="45" lengthAdjust="spacingAndGlyphs">U9001</text>
<use href="#XH" transform="matrix(18 0 0 27 349 784)"/><use href="#C" transform="matrix(9 0 0 15 390 785)"/><use href="#C" transform="matrix(9 0 0 15 400 785)"/><use href="#b" x="388" y="803"/><use href="#a" x="401" y="804"/><use href="#A" transform="matrix(15 0 0 8 414 801)"/><use href="#C" transform="matrix(10 0 0 20 413 777)"/><use href="#A" transform="matrix(20 0 0 10 451 770)"/><use href="#c" x="473" y="771"/>
<!-- caps right of U9002 -->
<use href="#b" x="465" y="592"/><use href="#b" x="477" y="593"/><use href="#a" x="466" y="599"/><use href="#a" x="477" y="599"/><use href="#c" x="489" y="594"/><use href="#e" x="496" y="593"/><use href="#a" x="466" y="606"/><use href="#a" x="467" y="613"/><use href="#c" x="479" y="607"/>
<path class="o" d="M487 607.500h14v16h-14z"/><path class="g" d="M488 608h5v7h-5zM495 608h5v7h-5zM488 617h5v6h-5zM495 617h5v6h-5z"/>
<use href="#c" x="458" y="617"/><use href="#a" x="472" y="621"/><use href="#b" x="475" y="628"/><use href="#a" x="489" y="627"/><use href="#a" x="489" y="636"/><use href="#a" x="475" y="634"/>
<use href="#c" x="459" y="643"/><use href="#c" x="465" y="641"/><use href="#c" x="473" y="641"/><use href="#a" x="478" y="644"/><use href="#a" x="483" y="651"/><use href="#a" x="491" y="651"/><use href="#b" x="459" y="656"/><use href="#c" x="471" y="653"/><use href="#a" x="481" y="657"/><use href="#a" x="491" y="659"/><use href="#a" x="459" y="664"/><use href="#a" x="459" y="671"/><use href="#a" x="491" y="666"/>
<use href="#Z" transform="matrix(15 0 0 20 474 664)"/><use href="#c" x="459" y="678"/><use href="#c" x="466" y="678"/><use href="#b" x="479" y="685"/><use href="#A" transform="matrix(15 0 0 7 479 691)"/><use href="#b" x="484" y="700"/>
<use href="#B" transform="matrix(12 0 0 15 480 705)"/><use href="#c" x="489" y="709"/><use href="#B" transform="matrix(7 0 0 15 480 721)"/><use href="#c" x="489" y="723"/><use href="#a" x="482" y="737"/><use href="#a" x="481" y="743"/><use href="#a" x="481" y="749"/><use href="#b" x="481" y="756"/><use href="#a" x="481" y="762"/>
<use href="#C" transform="matrix(9 0 0 15 514 622)"/><use href="#a" x="513" y="675"/><use href="#c" x="517" y="682"/><use href="#B" transform="matrix(13 0 0 8 527 597)"/><use href="#b" x="543" y="599"/><use href="#c" x="584" y="596"/><use href="#c" x="640" y="595"/><use href="#c" x="648" y="595"/><use href="#c" x="653" y="595"/><use href="#c" x="659" y="595"/><use href="#c" x="666" y="594"/><use href="#c" x="672" y="595"/><use href="#c" x="691" y="591"/>
<path class="dg" d="M513 603h3M514.500 601.500v3M517 654h3M518.500 652.500v3M516 667h3M517.500 665.500v3M693 671h3M694.500 669.500v3M694 677h3M695.500 675.500v3M693 684h3M694.500 682.500v3M693 689h3M694.500 687.500v3M695 745h3M696.500 743.500v3M578 771h3M579.500 769.500v3M595 771h3M596.500 769.500v3M635 777h3M636.500 775.500v3M327 674h3M328.500 672.500v3M333 674h3M334.500 672.500v3M392 712h3M393.500 710.500v3M398 714h3M399.500 712.500v3M393 718h3M394.500 716.500v3"/>
<polygon class="g" points="697,752 700,755 697,758 694,755"/>
<!-- UCP4000 -->
<rect x="528.500" y="608.500" width="158" height="154" fill="#b000b0" stroke="#f030f0"/>
<rect x="530" y="610" width="155" height="151" fill="url(#pm)"/>
<rect x="528" y="608" width="2" height="155" fill="#f030f0"/>
<text class="z" transform="rotate(-90 619 752)" x="619" y="752" font-size="32" fill="#a878f0" textLength="125" lengthAdjust="spacingAndGlyphs">UCP4000</text>
<use href="#c" x="536" y="774"/><use href="#a" x="530" y="789"/><use href="#c" x="553" y="781"/><use href="#c" x="558" y="781"/><use href="#c" x="565" y="780"/><use href="#c" x="571" y="781"/><use href="#c" x="577" y="781"/><use href="#c" x="582" y="780"/><use href="#c" x="587" y="780"/><use href="#c" x="595" y="783"/><use href="#c" x="587" y="792"/><use href="#c" x="604" y="771"/><use href="#C" transform="matrix(8 0 0 15 615 773)"/><use href="#e" x="648" y="771"/>
<use href="#C" transform="matrix(9 0 0 15 534 797)"/><use href="#D" transform="matrix(8 0 0 15 544 798)"/><use href="#C" transform="matrix(9 0 0 15 552 797)"/>
<rect x="565.500" y="794.500" width="16" height="15" fill="none" stroke="#c0c0c0"/><path class="g" d="M566 795h4v4h-4zM577 795h4v4h-4zM566 805h5v4h-5zM577 805h4v4h-4z"/>
<use href="#a" x="655" y="795"/><use href="#a" x="655" y="802"/><use href="#c" x="667" y="798"/>
<!-- UME5000 -->
<rect x="723.500" y="594.500" width="123" height="164" fill="none" stroke="#c0c0c0"/>
<path fill="url(#pb)" d="M736 593h46v28h-46zM736 635h46v35h-46zM757 670h25v14h-25zM736 690h46v28h-46zM736 732h46v27h-46zM729 656h7v7h-7zM729 691h7v7h-7zM803 593h44v166h-44zM782 656h21v49h-21z"/>
<path fill="url(#pu2)" d="M722 593h14v7h-14zM722 600h7v7h-7zM834 593h14v7h-14zM841 600h7v7h-7zM736 670h21v14h-21zM722 741h7v14h-7zM729 748h7v7h-7zM834 748h14v7h-14zM841 741h7v7h-7zM813 635h7v7h-7zM813 649h7v7h-7zM806 691h7v7h-7zM813 705h21v7h-21zM813 719h7v7h-7zM827 733h7v7h-7z"/>
<text class="z" transform="rotate(-90 795 743)" x="795" y="743" font-size="29" fill="#00e0f0" textLength="121" lengthAdjust="spacingAndGlyphs">UME5000</text>
<!-- top row -->
<use href="#c" x="707" y="572"/><use href="#c" x="715" y="573"/><use href="#c" x="727" y="573"/><use href="#D" transform="matrix(8 0 0 15 734 570)"/><use href="#D" transform="matrix(10 0 0 21 745 566)"/><use href="#D" transform="matrix(9 0 0 15 757 571)"/><use href="#D" transform="matrix(10 0 0 21 768 566)"/><use href="#c" x="782" y="573"/><use href="#D" transform="matrix(9 0 0 21 792 566)"/><use href="#D" transform="matrix(11 0 0 20 801 567)"/><use href="#c" x="814" y="577"/><use href="#c" x="822" y="576"/><use href="#c" x="828" y="577"/><use href="#c" x="834" y="576"/>
<path class="t" d="M746 554H961M961 556V680M956 687L929 731M923 744V814M857 816H923"/>
<use href="#C" transform="matrix(8 0 0 15 877 564)"/><use href="#c" x="888" y="567"/><use href="#B" transform="matrix(25 0 0 11 902 564)"/><use href="#a" x="939" y="566"/><use href="#a" x="939" y="572"/><use href="#Z" transform="matrix(16 0 0 19 936 579)"/><use href="#a" x="939" y="600"/>
<use href="#b" x="862" y="588"/><use href="#b" x="862" y="594"/><use href="#A" transform="matrix(21 0 0 10 874 583)"/><use href="#A" transform="matrix(21 0 0 10 874 595)"/>
<use href="#GG" transform="matrix(31 0 0 25 897 581)"/><text class="y" font-size="9" transform="rotate(-90 914 602)" x="914" y="602" textLength="20" lengthAdjust="spacingAndGlyphs" style="fill:#007f7f">L6001</text>
<use href="#D" transform="matrix(12 0 0 26 881 607)"/><use href="#b" x="894" y="611"/><use href="#B" transform="matrix(15 0 0 9 907 608)"/><use href="#a" x="924" y="611"/><use href="#c" x="937" y="607"/><use href="#a" x="943" y="613"/><use href="#a" x="943" y="620"/><use href="#a" x="942" y="625"/><use href="#B" transform="matrix(30 0 0 14 896 618)"/>
<use href="#D" transform="matrix(13 0 0 31 941 631)"/><use href="#c" x="933" y="629"/><use href="#c" x="863" y="629"/><use href="#a" x="862" y="641"/><use href="#C" transform="matrix(9 0 0 15 863 649)"/>
<rect class="d" x="882.500" y="645.500" width="33" height="33"/><text class="y" font-size="9" x="887" y="665" textLength="22" lengthAdjust="spacingAndGlyphs">U6000</text>
<use href="#D" transform="matrix(9 0 0 15 930 642)"/><use href="#b" x="929" y="658"/><use href="#a" x="927" y="665"/><use href="#a" x="938" y="664"/><use href="#Z" transform="matrix(15 0 0 19 928 672)"/><use href="#c" x="945" y="674"/><use href="#c" x="934" y="692"/>
<use href="#b" x="861" y="666"/><use href="#b" x="862" y="673"/><use href="#b" x="862" y="680"/><use href="#b" x="862" y="687"/>
<use href="#A" transform="matrix(21 0 0 10 875 687)"/><use href="#c" x="898" y="688"/><use href="#c" x="903" y="687"/><use href="#C" transform="matrix(9 0 0 21 910 690)"/><use href="#D" transform="matrix(9 0 0 20 923 692)"/>
<use href="#GG" transform="matrix(25 0 0 10 875 699)"/><use href="#c" x="903" y="699"/><use href="#B" transform="matrix(14 0 0 8 893 710)"/><use href="#c" x="863" y="693"/><use href="#a" x="863" y="704"/><use href="#a" x="863" y="713"/><use href="#a" x="863" y="718"/><use href="#c" x="876" y="712"/><use href="#c" x="914" y="716"/>
<rect class="d" x="887.500" y="723.500" width="21" height="16"/>
<use href="#B" transform="matrix(15 0 0 9 865 730)"/><use href="#B" transform="matrix(15 0 0 9 894 742)"/>
<rect x="863.500" y="741.500" width="18" height="19" fill="none" stroke="#c0c0c0"/><path class="g" d="M864 742h4v5h-4zM870 742h4v5h-4zM864 749h4v5h-4zM870 749h4v5h-4zM864 756h4v4h-4zM870 756h4v4h-4zM875 743h6v8h-6z"/>
<use href="#SH" transform="matrix(28 0 0 20 885 759)"/><use href="#HH" transform="matrix(28 0 0 21 884 786)"/>
<rect x="833.500" y="772.500" width="31" height="40" fill="none" stroke="#c0c0c0"/><path class="g" d="M843 773h11v13h-11zM834 798h10v15h-10z"/><path class="s" d="M853 798h10v14h-10z"/><text class="x" font-size="9" x="835" y="795" textLength="24" lengthAdjust="spacingAndGlyphs">TR6001</text>
<use href="#GG" transform="matrix(14 0 0 8 857 773)"/><use href="#a" x="871" y="785"/><use href="#a" x="871" y="792"/><use href="#b" x="872" y="799"/><use href="#b" x="872" y="805"/><use href="#c" x="865" y="798"/><use href="#D" transform="matrix(8 0 0 15 823 783)"/>
<use href="#c" x="725" y="765"/><use href="#C" transform="matrix(10 0 0 20 734 763)"/><use href="#c" x="748" y="769"/><use href="#B" transform="matrix(20 0 0 10 753 765)"/><use href="#b" x="776" y="766"/><use href="#a" x="793" y="765"/><use href="#B" transform="matrix(15 0 0 8 806 765)"/><use href="#b" x="824" y="765"/><use href="#b" x="837" y="766"/><use href="#a" x="814" y="776"/><use href="#b" x="827" y="774"/>
<path class="dg" d="M710 766h3M711.500 764.500v3"/>
<!-- U3007 -->
<use href="#C" transform="matrix(8 0 0 15 966 579)"/><use href="#C" transform="matrix(8 0 0 15 976 579)"/><use href="#GG" transform="matrix(25 0 0 12 984 583)"/><use href="#C" transform="matrix(12 0 0 24 1010 567)"/><use href="#D" transform="matrix(8 0 0 14 991 565)"/><use href="#D" transform="matrix(9 0 0 14 999 565)"/>
<use href="#b" x="968" y="565"/><use href="#b" x="979" y="565"/><use href="#b" x="967" y="571"/><use href="#b" x="979" y="571"/><use href="#b" x="1025" y="567"/><use href="#c" x="1038" y="565"/><use href="#c" x="1044" y="565"/><use href="#c" x="1050" y="565"/><use href="#A" transform="matrix(15 0 0 9 1058 566)"/>
<rect class="d" x="1032.500" y="579.500" width="46" height="29"/><text class="x" font-size="18" x="1032" y="600" textLength="45" lengthAdjust="spacingAndGlyphs">U3007</text>
<use href="#XH" transform="matrix(17 0 0 25 1100 562)"/><use href="#A" transform="matrix(15 0 0 9 1027 612)"/><use href="#c" x="1046" y="612"/><use href="#c" x="1052" y="612"/><use href="#a" x="1057" y="611"/><use href="#a" x="1057" y="617"/><use href="#a" x="1051" y="623"/><use href="#c" x="1068" y="614"/><use href="#c" x="1076" y="612"/><use href="#c" x="1092" y="605"/><use href="#c" x="1099" y="605"/><use href="#c" x="1105" y="605"/><use href="#b" x="1098" y="599"/>
<use href="#Z" transform="matrix(20 0 0 14 1068 627)"/><use href="#c" x="1092" y="617"/><use href="#c" x="1092" y="632"/><use href="#a" x="1098" y="620"/><use href="#a" x="1097" y="627"/><use href="#a" x="1098" y="636"/><use href="#b" x="1086" y="643"/><use href="#a" x="1098" y="643"/>
<path class="dg" d="M1084 590h3M1085.500 588.500v3M1084 597h3M1085.500 595.500v3M1084 602h3M1085.500 600.500v3M1111 627h3M1112.500 625.500v3M1111 633h3M1112.500 631.500v3M1111 639h3M1112.500 637.500v3M1110 645h3M1111.500 643.500v3"/>
<use href="#SH" transform="matrix(17 0 0 26 989 657)"/><use href="#XH" transform="matrix(17 0 0 26 1022 657)"/>
<g transform="rotate(45 1133 695)"><rect x="1120" y="683" width="26" height="24" fill="#000" stroke="#c0c0c0"/><path class="s" d="M1122 686h22v4h-22zM1122 693h22v6h-22zM1122 702h22v4h-22z"/></g>
<use href="#SV" transform="matrix(26 0 0 17 1092 705)"/><use href="#SV" transform="matrix(27 0 0 17 1131 718)"/><use href="#XV" transform="matrix(27 0 0 17 1131 745)"/><use href="#SH" transform="matrix(16 0 0 27 1103 733)"/>
<!-- far-right -->
<use href="#a" x="1364" y="564"/><use href="#a" x="1377" y="565"/><use href="#a" x="1397" y="563"/><use href="#a" x="1398" y="571"/><use href="#b" x="1413" y="573"/><use href="#b" x="1426" y="572"/><use href="#a" x="1425" y="579"/>
<rect x="1381.500" y="595.500" width="20" height="25" fill="#000" stroke="#c0c0c0"/><path class="g" d="M1382 597h5v5h-5zM1382 604h5v5h-5zM1382 611h5v4h-5zM1390 597h4v5h-4zM1390 615h4v5h-4z"/><path class="s" d="M1396 597h5v5h-5zM1396 611h5v5h-5z"/><rect x="1390" y="603" width="5" height="8" fill="#90d0c0"/>
<rect x="1420.500" y="585.500" width="19" height="21" fill="#000" stroke="#c0c0c0"/><path class="g" d="M1421 586h4v3h-4zM1428 586h4v3h-4zM1434 594h5v3h-5zM1421 600h4v5h-4zM1428 601h3v5h-3zM1434 600h5v4h-5z"/><path class="u" d="M1435 586h4v3h-4zM1421 594h4v3h-4z"/><rect class="s" x="1428" y="593" width="4" height="4"/>
<use href="#b" x="1441" y="585"/><use href="#a" x="1441" y="592"/><use href="#a" x="1441" y="599"/><use href="#b" x="1386" y="587"/><use href="#b" x="1400" y="587"/><use href="#a" x="1408" y="596"/><use href="#c" x="1404" y="597"/><use href="#a" x="1408" y="613"/><use href="#e" x="1403" y="611"/><use href="#b" x="1392" y="623"/>
<use href="#C" transform="matrix(7 0 0 15 1425 609)"/><use href="#C" transform="matrix(8 0 0 15 1434 609)"/><use href="#C" transform="matrix(7 0 0 15 1444 609)"/><use href="#c" x="1414" y="627"/><use href="#c" x="1420" y="627"/><use href="#c" x="1429" y="627"/><use href="#GG" transform="matrix(16 0 0 8 1435 628)"/>
<path class="dg" d="M1372 604h3M1373.500 602.500v3M1373 610h3M1374.500 608.500v3M1413 602h3M1414.500 600.500v3M1415 609h3M1416.500 607.500v3M1441 645h3M1442.500 643.500v3"/>
<use href="#SH" transform="matrix(18 0 0 27 1459 576)"/><use href="#SH" transform="matrix(17 0 0 27 1499 575)"/>
<path class="g" d="M1521 550h4v186h-4zM1474 637h20v3h-20zM1491 638h3v49h-3zM1412 657h3v29h-3zM1457 696h22v3h-22zM1457 758h60v3h-60zM1441 770h3v43h-3z"/>
<rect x="1416.500" y="652.500" width="71" height="34" fill="#000" stroke="#c0c0c0"/>
<path class="s" d="M1417 653h7v6h-7zM1473 653h14v6h-14zM1417 680h7v6h-7zM1473 680h14v6h-14zM1416 662h6v14h-6zM1481 662h6v14h-6z"/>
<path class="dg" stroke-width="6" stroke-dasharray="3 3" d="M1430 656H1470M1430 683H1470"/>
<rect class="u" x="1448" y="653" width="3" height="6"/><rect class="u" x="1464" y="653" width="3" height="6"/>
<text class="x" font-size="11.500" x="1428" y="674" textLength="41" lengthAdjust="spacingAndGlyphs">SOC9001</text>
<use href="#c" x="1419" y="702"/><use href="#c" x="1433" y="702"/><use href="#c" x="1446" y="702"/>
<path class="u" d="M1420 704h3v2h-3zM1420 708h3v2h-3zM1434 704h3v2h-3zM1434 708h3v2h-3zM1447 704h3v2h-3zM1447 708h3v2h-3z"/>
<polygon class="g" points="1502,705 1505,708 1502,711 1499,708"/><polygon class="g" points="1447,753 1450,756 1447,759 1444,756"/>
<rect x="1498.500" y="724.500" width="20" height="21" fill="#000" stroke="#c0c0c0"/><circle class="s" cx="1502" cy="728" r="3.500"/><circle class="g" cx="1513" cy="728" r="3.500"/><circle class="u" cx="1502" cy="741" r="4"/><circle class="g" cx="1513" cy="741" r="4"/>
<use href="#c" x="1447" y="741"/>
<rect x="1453.500" y="770.500" width="66" height="44" fill="#000" stroke="#c0c0c0"/>
<path class="s" d="M1463 771h10v9h-10zM1463 805h10v9h-10zM1454 778h3v5h-3zM1454 801h3v5h-3z"/><path class="g" d="M1480 771h4v9h-4zM1498 771h11v9h-11zM1480 805h4v9h-4zM1488 805h3v9h-3zM1498 805h11v9h-11zM1515 778h3v5h-3zM1515 802h3v5h-3z"/><rect class="u" x="1488" y="771" width="3" height="9"/>
<text class="x" font-size="11.500" x="1460" y="796" textLength="42" lengthAdjust="spacingAndGlyphs">SOC6000</text>
<use href="#XV" transform="matrix(26 0 0 18 1086 203)"/>
<rect class="s" x="1325" y="663" width="7" height="15"/><rect x="1327" y="668" width="4" height="4" fill="#000"/><use href="#C" transform="matrix(8 0 0 15 1341 663)"/>
<use href="#a" x="1233" y="682"/><use href="#b" x="1233" y="689"/><use href="#a" x="1232" y="696"/><use href="#SH" transform="matrix(17 0 0 26 1233 707)"/><use href="#a" x="1215" y="744"/><use href="#a" x="1256" y="744"/>
<!-- top right -->
<use href="#SV" transform="matrix(27 0 0 16 1253 167)"/><use href="#SV" transform="matrix(27 0 0 17 1307 157)"/><use href="#SV" transform="matrix(27 0 0 17 1377 163)"/><use href="#c" x="1293" y="168"/>
<rect x="1275.500" y="196.500" width="20" height="24" fill="#000" stroke="#c0c0c0"/><path class="g" d="M1276 197h4v4h-4zM1283 197h3v4h-3zM1289 197h5v4h-5zM1276 204h4v4h-4zM1290 204h4v4h-4zM1276 216h4v4h-4zM1283 216h3v4h-3zM1289 214h5v4h-5z"/><path class="s" d="M1276 209h4v4h-4zM1290 209h4v4h-4z"/>
<rect x="1372.500" y="191.500" width="19" height="24" fill="#000" stroke="#c0c0c0"/><path class="g" d="M1373 193h4v3h-4zM1380 192h3v5h-3zM1386 193h5v3h-5zM1373 199h4v3h-4zM1386 199h5v3h-5zM1373 205h4v3h-4zM1373 212h4v3h-4zM1380 210h3v5h-3zM1386 210h5v3h-5z"/><rect class="s" x="1386" y="205" width="5" height="3"/>
<use href="#b" x="1326" y="184"/><use href="#b" x="1340" y="183"/><use href="#a" x="1380" y="184"/><use href="#b" x="1394" y="184"/><use href="#a" x="1419" y="172"/><use href="#b" x="1418" y="218"/><use href="#a" x="1262" y="189"/><use href="#a" x="1262" y="195"/><use href="#a" x="1262" y="202"/><use href="#a" x="1263" y="212"/><use href="#b" x="1274" y="188"/><use href="#b" x="1285" y="189"/><use href="#b" x="1296" y="195"/><use href="#b" x="1297" y="203"/><use href="#c" x="1315" y="197"/><use href="#c" x="1322" y="197"/><use href="#e" x="1316" y="209"/><use href="#c" x="1322" y="209"/><use href="#e" x="1329" y="208"/><use href="#c" x="1336" y="192"/><use href="#a" x="1361" y="191"/><use href="#a" x="1360" y="198"/><use href="#b" x="1353" y="206"/><use href="#c" x="1364" y="205"/><use href="#a" x="1394" y="191"/><use href="#a" x="1394" y="198"/>
<path class="dg" d="M1295 223h3M1296.500 221.500v3M1301 223h3M1302.500 221.500v3"/>
<!-- IED6000 -->
<rect x="1457" y="289" width="30" height="42" fill="#000"/><rect class="g" x="1458" y="290" width="28" height="11"/><rect class="s" x="1457" y="318" width="30" height="13"/><rect x="1457.500" y="289.500" width="29" height="41" fill="none" stroke="#c0c0c0"/>
<text class="x" font-size="8.500" x="1455" y="311" textLength="28" lengthAdjust="spacingAndGlyphs">IED6000</text>
</g>

<!-- toolbar -->
<rect x="270" y="134" width="364" height="24" fill="#fff"/>
<path d="M633.500 134V157.500H270" fill="none" stroke="#909090"/>
<circle cx="282" cy="144" r="5.500" fill="none" stroke="#909090" stroke-width="1.300"/><path d="M286 148l5 6" stroke="#808080" stroke-width="1.500"/>
<rect x="295.500" y="137.500" width="49" height="18" fill="#fff" stroke="#505050"/>
<text x="297" y="151" font-family="Liberation Sans,sans-serif" font-size="13.500" fill="#111" textLength="47">SOC800</text>
<circle cx="356" cy="146" r="7.500" fill="#bcdcf4" stroke="#7aa0c0"/><path d="M352 146h8M356 142v8" stroke="#1a5cae" stroke-width="2"/>
<circle cx="378" cy="146" r="7.500" fill="#bcdcf4" stroke="#7aa0c0"/><path d="M374 146h8" stroke="#1a5cae" stroke-width="2"/>
<path d="M398.500 143.500h8v9h-8z" fill="#f2f2f2" stroke="#c8c8c8"/><path d="M390.500 138.500h9v9h-9z" fill="#c4dcf0" stroke="#7a9ab8"/><path d="M401 139h3v3M402 143l2-1 1 1" fill="none" stroke="#444"/>
<path d="M412.500 143.500h7v9h-7z" fill="#f2f2f2" stroke="#c8c8c8"/><path d="M417.500 138.500h9v9h-9z" fill="#c4dcf0" stroke="#7a9ab8"/><path d="M415 139h-3v3M414 143l-2-1-1 1" fill="none" stroke="#444"/>
<rect x="433.500" y="138.500" width="33" height="14" fill="#e8e8e8" stroke="#606060"/><rect x="437" y="140" width="11" height="11" fill="#80e000" stroke="#333"/><path d="M455 144h7l-3.500 4z" fill="#000"/>
<rect x="471.500" y="138.500" width="33" height="14" fill="#e8e8e8" stroke="#606060"/><rect x="475" y="140" width="11" height="11" fill="#f00000" stroke="#333"/><path d="M493 144h7l-3.500 4z" fill="#000"/>
<rect x="512" y="138" width="15" height="15" rx="3" fill="#d8d8d8" stroke="#222" stroke-width="1.800"/><rect x="515" y="143" width="6" height="6" fill="#fff" stroke="#222"/><path d="M518 143v-3h6v6h-3" fill="none" stroke="#222"/>
<rect x="532.500" y="138.500" width="13" height="14" rx="2" fill="#fff" stroke="#e87848" stroke-width="1.500"/><text x="535" y="150" font-family="Liberation Sans" font-size="14" fill="#10b8b8">a</text>
<rect x="551.500" y="138.500" width="13" height="14" rx="1" fill="#fff" stroke="#5080b0" stroke-width="1.300"/><path d="M555 141h7v3h-7zM555 147h7v3h-7z" fill="#f070d0"/>
<text x="570" y="150" font-family="Liberation Sans,sans-serif" font-size="14" font-weight="700" fill="#00c8c8" textLength="15" lengthAdjust="spacingAndGlyphs">CR</text>
<rect x="589.500" y="138.500" width="15" height="14" fill="#f8f8f8" stroke="#c0c0c0"/><text x="591" y="150" font-family="Liberation Sans,sans-serif" font-size="14" font-weight="700" fill="#909090">Ω</text>
<circle cx="618" cy="145" r="7.500" fill="#eee" stroke="#606060" stroke-width="1.500"/><path d="M618 141a4 4 0 1 1-3.500 2" fill="none" stroke="#555"/>

<!-- status -->
<rect x="8" y="836" width="1520" height="21" fill="#466786"/>
<rect x="8" y="836" width="1520" height="1" fill="#8ea4b8"/>
<text class="m" x="8" y="853">Version:1.0.0.50</text>
<text class="m" x="1299" y="853" style="fill:#fff">Component:SOC8001 Model:F38-13 Pin:17</text>
</svg>
</body></html>
